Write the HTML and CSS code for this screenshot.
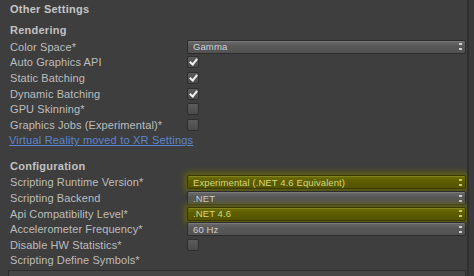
FILE: index.html
```html
<!DOCTYPE html>
<html lang="en">
<head>
    <meta charset="UTF-8">
    <title>Player Settings</title>
    <link rel="stylesheet" href="styles.css">
</head>
<body>
    <div class="inspector">
        <div class="panel">
            <div class="title">Other Settings</div>

            <!-- Rendering -->
            <div class="header first">Rendering</div>
            <div class="row">
                <div class="label">Color Space*</div>
                <div class="popup"><span>Gamma</span><i class="arrows"></i></div>
            </div>
            <div class="row">
                <div class="label">Auto Graphics API</div>
                <div class="check on"></div>
            </div>
            <div class="row">
                <div class="label">Static Batching</div>
                <div class="check on"></div>
            </div>
            <div class="row">
                <div class="label">Dynamic Batching</div>
                <div class="check on"></div>
            </div>
            <div class="row">
                <div class="label">GPU Skinning*</div>
                <div class="check"></div>
            </div>
            <div class="row">
                <div class="label">Graphics Jobs (Experimental)*</div>
                <div class="check"></div>
            </div>
            <div class="row">
                <a class="link" href="#">Virtual Reality moved to XR Settings</a>
            </div>

            <!-- Configuration -->
            <div class="header second">Configuration</div>
            <div class="row">
                <div class="label">Scripting Runtime Version*</div>
                <div class="popup hl"><span>Experimental (.NET 4.6 Equivalent)</span><i class="arrows"></i></div>
            </div>
            <div class="row">
                <div class="label">Scripting Backend</div>
                <div class="popup"><span>.NET</span><i class="arrows"></i></div>
            </div>
            <div class="row">
                <div class="label">Api Compatibility Level*</div>
                <div class="popup hl"><span>.NET 4.6</span><i class="arrows"></i></div>
            </div>
            <div class="row">
                <div class="label">Accelerometer Frequency*</div>
                <div class="popup"><span>60 Hz</span><i class="arrows"></i></div>
            </div>
            <div class="row">
                <div class="label">Disable HW Statistics*</div>
                <div class="check"></div>
            </div>
            <div class="row">
                <div class="label">Scripting Define Symbols*</div>
            </div>
            <div class="textfield"></div>
        </div>
        <div class="scrollbar"></div>
    </div>
</body>
</html>
```

FILE: styles.css
```css
body {
    margin: 0;
    background-color: #3e3e3e;
    font-family: "Liberation Sans", Arial, sans-serif;
    font-size: 11px;
    color: #bdbdbd;
    overflow: hidden;
}
.inspector {
    display: flex;
    height: 276px;
}
.panel {
    flex: 1;
    padding: 0 1px 0 10px;
    overflow: hidden;
}
.scrollbar {
    width: 5px;
    background-color: #3a3a3a;
    border-left: 2px solid #2f2f2f;
}
.title {
    height: 18px;
    line-height: 18px;
    font-weight: bold;
    color: #c6c6c6;
    letter-spacing: 0.25px;
}
.header {
    height: 15px;
    line-height: 15px;
    font-weight: bold;
    color: #c2c2c2;
    letter-spacing: 0.25px;
}
.header.first {
    margin-top: 5px;
    margin-bottom: 1px;
}
.header.second {
    margin-top: 10.5px;
    margin-bottom: 1px;
}
.row {
    display: flex;
    align-items: center;
    height: 15.6px;
}
.label {
    width: 177px;
    flex: none;
    letter-spacing: 0.1px;
    white-space: nowrap;
}
.link {
    color: #5d86cf;
    text-decoration: underline;
    letter-spacing: 0.2px;
    margin-left: -1px;
}

/* popup field */
.popup {
    flex: 1;
    display: flex;
    align-items: center;
    height: 12px;
    margin-left: 0;
    padding-left: 5px;
    border: 1px solid #2c2c2c;
    border-radius: 2px;
    background: linear-gradient(#6a6a6a, #575757 45%, #525252);
    box-shadow: inset 0 1px 0 #7a7a7a;
    color: #d2d2d2;
    font-size: 9.5px;
    letter-spacing: 0.1px;
}
.popup span {
    flex: 1;
}
.arrows {
    width: 3px;
    height: 7px;
    margin-right: 3px;
    background:
        linear-gradient(#cfcfcf, #cfcfcf) top / 3px 2px no-repeat,
        linear-gradient(#cfcfcf, #cfcfcf) bottom / 3px 2px no-repeat;
}
.popup.hl {
    background: linear-gradient(#6e6e08, #5b5b00 50%, #545400);
    border-color: #3a3a00;
    box-shadow: 0 0 6px 3px rgba(112, 112, 0, 0.7), inset 0 1px 0 #838320;
    color: #d8d87a;
}
.popup.hl .arrows {
    background:
        linear-gradient(#c8c870, #c8c870) top / 3px 2px no-repeat,
        linear-gradient(#c8c870, #c8c870) bottom / 3px 2px no-repeat;
}

/* checkbox */
.check {
    width: 10px;
    height: 10px;
    margin-left: 0;
    border: 1px solid #2e2e2e;
    border-radius: 2px;
    background: linear-gradient(#5c5c5c, #4a4a4a);
    position: relative;
}
.check.on::after {
    content: "";
    position: absolute;
    left: 3px;
    top: 0;
    width: 3px;
    height: 6px;
    border: solid #f2f2f2;
    border-width: 0 2px 2px 0;
    transform: rotate(40deg);
}
.textfield {
    margin-top: 2px;
    height: 20px;
    margin-left: -2px;
    border: 1px solid #2e2e2e;
    border-bottom: none;
    background-color: #464646;
}
```
